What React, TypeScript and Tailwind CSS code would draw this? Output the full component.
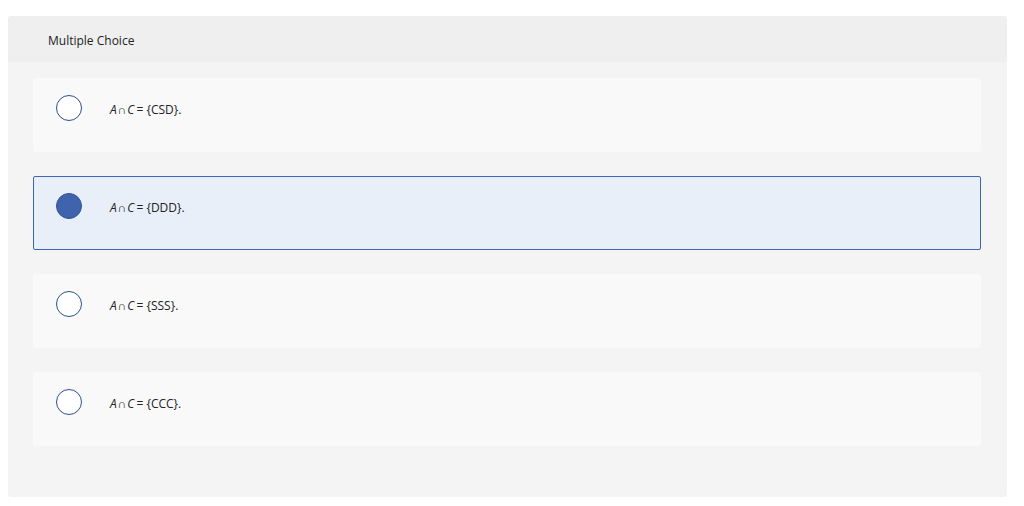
import React from "react";

const options = [
  { label: "CSD", selected: false },
  { label: "DDD", selected: true },
  { label: "SSS", selected: false },
  { label: "CCC", selected: false },
];

export default function App() {
  return (
    <div className="w-[1024px] h-[506px] bg-white pt-[16px] pl-[8px]" style={{ fontFamily: '"Open Sans", "Liberation Sans", sans-serif' }}>
      <div className="w-[999px] h-[481px] rounded-[3px] bg-[#f4f4f4] flex flex-col overflow-hidden">
        <div className="h-[46px] bg-[#efefef] flex items-center pl-[40px] pt-[3px] text-[12px] text-[#222]">
          Multiple Choice
        </div>
        <div className="flex flex-col gap-[24px] pt-[16px] pl-[25px] pr-[26px]">
          {options.map((o) => (
            <div
              key={o.label}
              className={
                o.selected
                  ? "h-[74px] rounded-[2px] bg-[#e8eff9] border border-[#3f66b0] flex items-start pt-[16px] pl-[22px]"
                  : "h-[74px] rounded-[3px] bg-[#f9f9f9] flex items-start pt-[17px] pl-[23px]"
              }
            >
              <div
                className={
                  o.selected
                    ? "w-[26px] h-[26px] rounded-full bg-[#3f63ad] border border-[#2f5496] shrink-0"
                    : "w-[26px] h-[26px] rounded-full bg-white border border-[#2d4f8e] shrink-0"
                }
              />
              <div className="ml-[28px] h-[26px] pt-[3px] flex items-center text-[12px] text-[#222]">
                <span className="italic">A</span>
                <span className="mx-[1px]">∩</span>
                <span className="italic">C</span>
                <span className="ml-[2px]">= {"{"}{o.label}{"}"}.</span>
              </div>
            </div>
          ))}
        </div>
      </div>
    </div>
  );
}
